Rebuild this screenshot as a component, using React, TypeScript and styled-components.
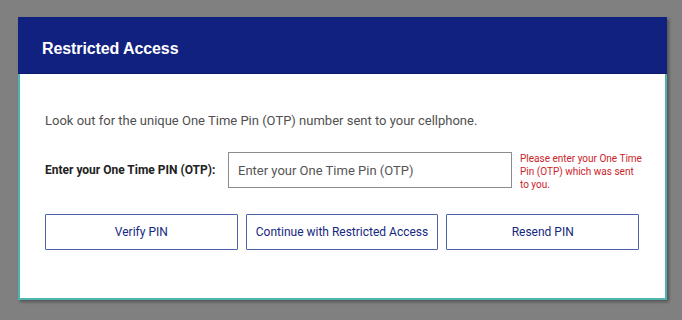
import styled, { createGlobalStyle } from 'styled-components';

const GlobalStyle = createGlobalStyle`
    html, body {
        margin: 0;
        padding: 0;
        background-color: #808080;
        font-family: "Liberation Sans", Arial, sans-serif;
    }
`;

const Page = styled.div`
    width: 682px;
    height: 320px;
    padding: 17px 15px 0 18px;
    box-sizing: border-box;
`;

const Modal = styled.div`
    width: 649px;
    background-color: #fff;
    box-shadow: 2px 2px 3px rgba(0, 0, 0, 0.35);
`;

const Header = styled.div`
    height: 57px;
    box-sizing: border-box;
    padding: 7px 0 0 24px;
    background-color: #10217f;
    border-bottom: 1px solid #0a176a;
    display: flex;
    align-items: center;

    h1{
        margin: 0;
        color: #fff;
        font-size: 16px;
        font-weight: bold;
        letter-spacing: -0.1px;
    }
`;

const Body = styled.div`
    border: 2px solid #4fb3b0;
    border-top: none;
    padding: 37px 26px 48px 25px;
`;

const Intro = styled.p`
    margin: 0;
    font-family: Roboto, "Liberation Sans", sans-serif;
    font-size: 13px;
    line-height: 20px;
    color: #505050;
`;

const OtpRow = styled.div`
    margin-top: 21px;
    height: 36px;
    display: flex;
    align-items: center;

    label{
        width: 183px;
        flex-shrink: 0;
        font-family: Roboto, "Liberation Sans", sans-serif;
        font-size: 12px;
        font-weight: bold;
        color: #222;
    }
`;

const OtpInput = styled.input`
    width: 284px;
    height: 36px;
    flex-shrink: 0;
    box-sizing: border-box;
    border: 1px solid #8c8c8c;
    padding: 0 9px;
    font-family: Roboto, "Liberation Sans", sans-serif;
    font-size: 13px;
    color: #333;
    outline: none;

    &::placeholder{
        color: #555;
    }
`;

const ErrorText = styled.div`
    margin-left: 8px;
    width: 122px;
    flex-shrink: 0;
    align-self: flex-start;
    font-family: Roboto, "Liberation Sans", sans-serif;
    font-size: 10px;
    line-height: 13px;
    color: #cc2229;
`;

const Actions = styled.div`
    margin-top: 26px;
    display: flex;
    gap: 8px;
    width: 594px;
`;

const ActionButton = styled.button`
    flex: 1;
    height: 36px;
    background-color: #fff;
    border: 1px solid #4a63a8;
    border-radius: 1px;
    color: #142880;
    font-family: Roboto, "Liberation Sans", sans-serif;
    font-size: 12px;
    cursor: pointer;

    &:hover{
        background-color: #f2f4fb;
    }
`;

export default function App() {
    return (
        <>
            <GlobalStyle />
            <Page>
                <Modal>
                    <Header>
                        <h1>Restricted Access</h1>
                    </Header>
                    <Body>
                        <Intro>Look out for the unique One Time Pin (OTP) number sent to your cellphone.</Intro>

                        <OtpRow>
                            <label htmlFor="otp">Enter your One Time PIN (OTP):</label>
                            <OtpInput id="otp" type="text" placeholder="Enter your One Time Pin (OTP)" />
                            <ErrorText>Please enter your One Time Pin (OTP) which was sent to you.</ErrorText>
                        </OtpRow>

                        <Actions>
                            <ActionButton>Verify PIN</ActionButton>
                            <ActionButton>Continue with Restricted Access</ActionButton>
                            <ActionButton>Resend PIN</ActionButton>
                        </Actions>
                    </Body>
                </Modal>
            </Page>
        </>
    );
}
